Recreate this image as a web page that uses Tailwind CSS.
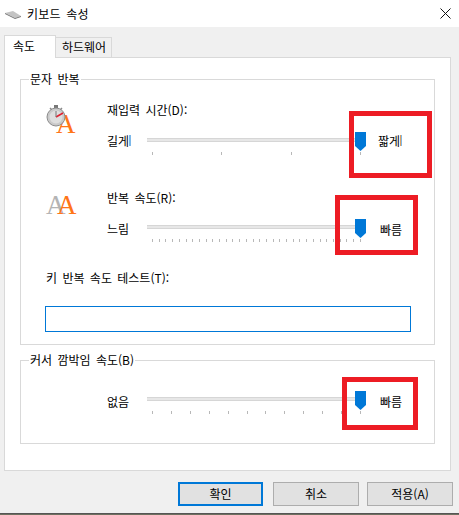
<!DOCTYPE html>
<html lang="ko">
<head>
<meta charset="UTF-8">
<title>키보드 속성</title>
<script src="https://cdn.jsdelivr.net/npm/@tailwindcss/browser@4"></script>
</head>
<body class="bg-[#f0f0f0]">
<div class="relative w-[459px] h-[515px] overflow-hidden flex flex-col font-['Noto_Sans_CJK_KR','Liberation_Sans',sans-serif] text-[12px] leading-[16px] text-black [word-spacing:2px]">

  <!-- title bar -->
  <div class="h-[27px] bg-white flex items-center shrink-0">
    <svg class="ml-[5px] w-[16px] h-[10px] mt-[2px]" viewBox="0 0 16 10">
      <path d="M0 3 L8 1 L16 6 L10 8 Z" fill="#c4c4c4"/>
      <path d="M0 3 L10 8 L16 6 L16 7 L10 9 L0 4 Z" fill="#777"/>
    </svg>
    <span class="ml-[6px] tracking-[0.2px]">키보드 속성</span>
    <svg class="ml-auto mr-[8px] w-[11px] h-[11px]" viewBox="0 0 11 11">
      <path d="M0.5 0.5 L10.5 10.5 M10.5 0.5 L0.5 10.5" stroke="#111" stroke-width="1" fill="none"/>
    </svg>
  </div>

  <!-- tabs -->
  <div class="h-[30px] pt-[8px] pl-[4px] flex items-end shrink-0 relative z-10">
    <div class="w-[52px] h-[23px] bg-white border border-b-0 border-[#d9d9d9] pl-[8px] pt-[2px] -mb-px">속도</div>
    <div class="w-[56px] h-[20px] border border-l-0 border-b-0 border-[#d9d9d9] pl-[6px] pt-[1px]">하드웨어</div>
  </div>

  <!-- panel -->
  <div class="ml-[4px] w-[447px] h-[414px] bg-white border border-[#d9d9d9] pt-[21px] pl-[15px] shrink-0">

    <div class="relative w-[415px] h-[266px] border border-[#d9d9d9]">
      <span class="absolute left-[8px] -top-[9px] bg-white px-[1px]">문자 반복</span>
      <div class="pl-[25px] pt-[22px]">

        <div class="flex h-[88px]">
          <svg class="w-[61px] h-[40px] shrink-0 mt-[3px] overflow-visible" viewBox="0 0 61 40">
            <text x="10" y="28" font-family="Liberation Serif" font-size="27" fill="#ff7518">A</text>
            <path d="M4 3 L6 5 M16 3 L14 5" stroke="#8a8a8a" stroke-width="1.5"/>
            <rect x="8" y="0" width="4" height="3" fill="#777"/>
            <circle cx="10" cy="12" r="9" fill="#c9c9c9" stroke="#8c8c8c"/>
            <circle cx="10" cy="12" r="6.5" fill="#dedede"/>
            <path d="M10 12 L17 8" stroke="#e02030" stroke-width="1.5"/>
            <path d="M10 12 L10 6" stroke="#777" stroke-width="1"/>
          </svg>
          <div>
            <div>재입력 시간(D):</div>
            <div class="flex mt-[12px] h-[28px]">
              <span class="w-[40px] pt-[3px] flex items-start">길게<i class="block w-[2px] h-[11px] mt-[2px] bg-[#7db9ea]"></i></span>
              <div class="relative w-[222px] h-[28px]">
                <div class="absolute left-0 top-[8px] w-[213px] h-[4px] bg-[#e7e7e7] border-y border-[#d6d6d6]"></div>
                <svg class="absolute left-[208px] top-[2px] w-[11px] h-[19px]" viewBox="0 0 11 19"><path d="M0 0 H11 V14 L5.5 19 L0 14 Z" fill="#0078d7"/></svg>
                <div class="absolute left-[5px] top-[22px] w-[209px] flex justify-between">
                  <i class="block w-px h-[3px] bg-[#b8b8b8]"></i><i class="block w-px h-[3px] bg-[#b8b8b8]"></i><i class="block w-px h-[3px] bg-[#b8b8b8]"></i><i class="block w-px h-[3px] bg-[#b8b8b8]"></i>
                </div>
              </div>
              <span class="ml-[9px] pt-[3px] flex items-start">짧게<i class="block w-[1px] h-[11px] mt-[2px] bg-[#e0a060]"></i><i class="block w-[1px] h-[11px] mt-[2px] bg-[#7db9ea]"></i></span>
            </div>
          </div>
        </div>

        <div class="flex h-[80px]">
          <svg class="w-[61px] h-[30px] shrink-0 mt-[4px] overflow-visible" viewBox="0 0 61 30">
            <text y="20" font-family="Liberation Serif" font-size="27"><tspan x="0" fill="#b4b4b4">A</tspan><tspan x="11" fill="#ff7518">A</tspan></text>
          </svg>
          <div>
            <div>반복 속도(R):</div>
            <div class="flex mt-[11px] h-[28px]">
              <span class="w-[40px] pt-[4px]">느림</span>
              <div class="relative w-[222px] h-[28px]">
                <div class="absolute left-0 top-[8px] w-[213px] h-[4px] bg-[#e7e7e7] border-y border-[#d6d6d6]"></div>
                <svg class="absolute left-[208px] top-[2px] w-[11px] h-[19px]" viewBox="0 0 11 19"><path d="M0 0 H11 V14 L5.5 19 L0 14 Z" fill="#0078d7"/></svg>
                <div class="absolute left-[5px] top-[22px] w-[209px] flex justify-between">
                  <i class="block w-px h-[3px] bg-[#b8b8b8]"></i><i class="block w-px h-[3px] bg-[#b8b8b8]"></i><i class="block w-px h-[3px] bg-[#b8b8b8]"></i><i class="block w-px h-[3px] bg-[#b8b8b8]"></i><i class="block w-px h-[3px] bg-[#b8b8b8]"></i><i class="block w-px h-[3px] bg-[#b8b8b8]"></i><i class="block w-px h-[3px] bg-[#b8b8b8]"></i><i class="block w-px h-[3px] bg-[#b8b8b8]"></i>
                  <i class="block w-px h-[3px] bg-[#b8b8b8]"></i><i class="block w-px h-[3px] bg-[#b8b8b8]"></i><i class="block w-px h-[3px] bg-[#b8b8b8]"></i><i class="block w-px h-[3px] bg-[#b8b8b8]"></i><i class="block w-px h-[3px] bg-[#b8b8b8]"></i><i class="block w-px h-[3px] bg-[#b8b8b8]"></i><i class="block w-px h-[3px] bg-[#b8b8b8]"></i><i class="block w-px h-[3px] bg-[#b8b8b8]"></i>
                  <i class="block w-px h-[3px] bg-[#b8b8b8]"></i><i class="block w-px h-[3px] bg-[#b8b8b8]"></i><i class="block w-px h-[3px] bg-[#b8b8b8]"></i><i class="block w-px h-[3px] bg-[#b8b8b8]"></i><i class="block w-px h-[3px] bg-[#b8b8b8]"></i><i class="block w-px h-[3px] bg-[#b8b8b8]"></i><i class="block w-px h-[3px] bg-[#b8b8b8]"></i><i class="block w-px h-[3px] bg-[#b8b8b8]"></i>
                  <i class="block w-px h-[3px] bg-[#b8b8b8]"></i><i class="block w-px h-[3px] bg-[#b8b8b8]"></i><i class="block w-px h-[3px] bg-[#b8b8b8]"></i><i class="block w-px h-[3px] bg-[#b8b8b8]"></i><i class="block w-px h-[3px] bg-[#b8b8b8]"></i><i class="block w-px h-[3px] bg-[#b8b8b8]"></i><i class="block w-px h-[3px] bg-[#b8b8b8]"></i><i class="block w-px h-[3px] bg-[#b8b8b8]"></i>
                </div>
              </div>
              <span class="ml-[11px] pt-[5px]">빠름</span>
            </div>
          </div>
        </div>

        <div>키 반복 속도 테스트(T):</div>
        <div class="-ml-[1px] mt-[20px] w-[366px] h-[26px] bg-white border border-[#0078d7]"></div>
      </div>
    </div>

    <div class="relative w-[415px] h-[84px] mt-[15px] border border-[#d9d9d9]">
      <span class="absolute left-[8px] -top-[9px] bg-white px-[1px]">커서 깜박임 속도(B)</span>
      <div class="flex pl-[86px] pt-[28px] h-[28px] box-content">
        <span class="w-[40px] pt-[5px]">없음</span>
        <div class="relative w-[222px] h-[28px]">
          <div class="absolute left-0 top-[8px] w-[213px] h-[4px] bg-[#e7e7e7] border-y border-[#d6d6d6]"></div>
          <svg class="absolute left-[208px] top-[2px] w-[11px] h-[19px]" viewBox="0 0 11 19"><path d="M0 0 H11 V14 L5.5 19 L0 14 Z" fill="#0078d7"/></svg>
          <div class="absolute left-[5px] top-[22px] w-[209px] flex justify-between">
            <i class="block w-px h-[3px] bg-[#b8b8b8]"></i><i class="block w-px h-[3px] bg-[#b8b8b8]"></i><i class="block w-px h-[3px] bg-[#b8b8b8]"></i><i class="block w-px h-[3px] bg-[#b8b8b8]"></i><i class="block w-px h-[3px] bg-[#b8b8b8]"></i><i class="block w-px h-[3px] bg-[#b8b8b8]"></i>
            <i class="block w-px h-[3px] bg-[#b8b8b8]"></i><i class="block w-px h-[3px] bg-[#b8b8b8]"></i><i class="block w-px h-[3px] bg-[#b8b8b8]"></i><i class="block w-px h-[3px] bg-[#b8b8b8]"></i><i class="block w-px h-[3px] bg-[#b8b8b8]"></i><i class="block w-px h-[3px] bg-[#b8b8b8]"></i>
          </div>
        </div>
        <span class="ml-[11px] pt-[5px]">빠름</span>
      </div>
    </div>
  </div>

  <!-- buttons -->
  <div class="flex pl-[178px] mt-[11px] shrink-0">
    <button class="w-[85px] h-[24px] bg-[#e1e1e1] border-2 border-[#0078d7]">확인</button>
    <button class="ml-[10px] w-[86px] h-[24px] bg-[#e1e1e1] border border-[#adadad]">취소</button>
    <button class="ml-[8px] w-[86px] h-[24px] bg-[#e1e1e1] border border-[#adadad]">적용(A)</button>
  </div>

  <div class="mt-auto h-[2px] bg-[#6f7060] border-t border-[#555]"></div>

  <!-- red annotation boxes -->
  <div class="absolute left-[349px] top-[111px] w-[83px] h-[67px] border-[5px] border-[#ed1c24]"></div>
  <div class="absolute left-[335px] top-[195px] w-[83px] h-[60px] border-[5px] border-[#ed1c24]"></div>
  <div class="absolute left-[342px] top-[377px] w-[76px] h-[53px] border-[5px] border-[#ed1c24]"></div>
</div>
</body>
</html>
